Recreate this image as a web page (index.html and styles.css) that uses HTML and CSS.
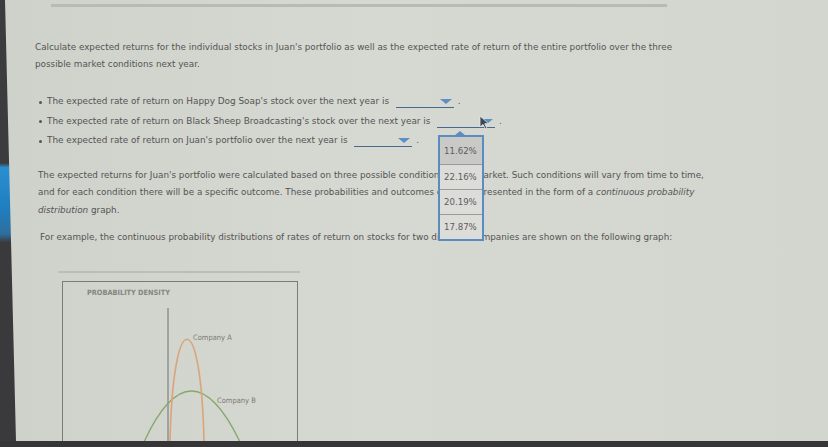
FILE: index.html
```html
<!DOCTYPE html>
<html>
<head>
<meta charset="utf-8">
<link rel="stylesheet" href="styles.css">
</head>
<body>
<div class="screen">
  <main class="page">
    <div class="top-rule"></div>
    <p class="intro">Calculate expected returns for the individual stocks in Juan's portfolio as well as the expected rate of return of the entire portfolio over the three possible market conditions next year.</p>
    <ul class="questions">
      <li>The expected rate of return on Happy Dog Soap's stock over the next year is <span class="dd"><span class="tri"></span></span> <span class="dot">.</span></li>
      <li>The expected rate of return on Black Sheep Broadcasting's stock over the next year is <span class="dd"><span class="tri"></span></span> <span class="dot">.</span></li>
      <li>The expected rate of return on Juan's portfolio over the next year is <span class="dd"><span class="tri"></span></span> <span class="dot">.</span></li>
    </ul>
    <p class="expl">The expected returns for Juan's portfolio were calculated based on three possible conditions in the market. Such conditions will vary from time to time, and for each condition there will be a specific outcome. These probabilities and outcomes can be represented in the form of a <em>continuous probability distribution</em> graph.</p>
    <p class="expl2">For example, the continuous probability distributions of rates of return on stocks for two different companies are shown on the following graph:</p>
    <section class="graph">
      <div class="graph-rule"></div>
      <div class="graph-box">
        <svg class="chart" width="235" height="160" viewBox="0 0 235 160">
          <text x="24" y="13" class="axis-label">PROBABILITY DENSITY</text>
          <line x1="105" y1="26" x2="105" y2="160" stroke="#6f706c" stroke-width="1"/>
          <path d="M81 160 Q128 58 177 160" fill="none" stroke="#86a86a" stroke-width="1.3"/>
          <path d="M107 160 C110 23 138 23 141 160" fill="none" stroke="#d9a57a" stroke-width="1.6"/>
          <text x="130" y="58" class="curve-label">Company A</text>
          <text x="154" y="121" class="curve-label">Company B</text>
        </svg>
      </div>
    </section>
  </main>
  <footer class="taskbar"></footer>
</div>
<div class="photo-edge"></div>
<div class="listbox">
  <div class="opt selected">11.62%</div>
  <div class="opt">22.16%</div>
  <div class="opt">20.19%</div>
  <div class="opt">17.87%</div>
</div>
<svg class="cursor" width="12" height="16" viewBox="0 0 12 16"><path d="M1 1 L1 12 L4 9.5 L6.5 14 L8 13.3 L5.7 8.8 L9.5 8.6 Z" fill="#3d4752" stroke="#e8e8e8" stroke-width="0.8"/></svg>
</body>
</html>
```

FILE: styles.css
```css
html, body {
  margin: 0;
  padding: 0;
}
body {
  width: 828px;
  height: 447px;
  overflow: hidden;
  background: #3a3a3c;
  font-family: "DejaVu Sans", Verdana, sans-serif;
  position: relative;
}
.screen {
  height: 447px;
  display: flex;
  flex-direction: column;
}
.page {
  flex: 1;
  overflow: hidden;
  background: linear-gradient(90deg, #cfd1cb 0%, #d6d8d2 45%, #d3d6ce 100%);
  color: #545454;
  font-size: 8.8px;
  padding-left: 35px;
}
.top-rule {
  margin: 4px 0 0 16px;
  width: 616px;
  height: 3px;
  background: #b9bab3;
}
.intro {
  margin: 32px 0 0 0;
  width: 660px;
  line-height: 17px;
}
.questions {
  margin: 19px 0 0 0;
  padding: 0 0 0 12px;
  list-style: none;
}
.questions li {
  line-height: 19.5px;
  position: relative;
  font-size: 8.9px;
}
.questions li::before {
  content: "";
  position: absolute;
  left: -8px;
  top: 8.5px;
  width: 3px;
  height: 3px;
  border-radius: 50%;
  background: #555;
}
.dd {
  display: inline-block;
  width: 58px;
  height: 10px;
  border-bottom: 1px solid #48688f;
  vertical-align: -4px;
  margin-left: 4px;
  position: relative;
}
.tri {
  position: absolute;
  right: 2px;
  top: 2px;
  width: 0;
  height: 0;
  border-left: 6px solid transparent;
  border-right: 6px solid transparent;
  border-top: 5px solid #5d8fc7;
}
.dot {
  margin-left: 1px;
}
.expl {
  margin: 16px 0 0 3px;
  width: 680px;
  line-height: 17.5px;
}
.expl2 {
  margin: 10px 0 0 5px;
  line-height: 17px;
}
.graph {
  margin: 25px 0 0 23px;
}
.graph-rule {
  width: 242px;
  height: 2px;
  background: #bdbdb3;
}
.graph-box {
  margin: 8px 0 0 4px;
  width: 234px;
  height: 160px;
  border: 1px solid #7a7b77;
  border-bottom: none;
}
.chart {
  display: block;
}
.axis-label {
  font-family: "DejaVu Sans Condensed", "DejaVu Sans", sans-serif;
  font-size: 7.3px;
  font-weight: bold;
  fill: #858680;
}
.curve-label {
  font-family: "DejaVu Sans Condensed", "DejaVu Sans", sans-serif;
  font-size: 7.5px;
  fill: #7b7c78;
}
.taskbar {
  height: 6px;
  background: #363638;
}
.photo-edge {
  position: absolute;
  left: 0;
  top: 0;
  width: 20px;
  height: 441px;
  background: linear-gradient(180deg, #3c3c3e 0%, #3c3c3e 37%, #2a8fcf 38%, #1f7fc0 47%, #2d6f9e 53%, #3a3a3c 55%, #3a3a3c 100%);
  clip-path: polygon(0 0, 5px 0, 16px 441px, 0 441px);
}
.listbox {
  position: absolute;
  left: 438px;
  top: 135px;
  width: 42px;
  border: 2px solid #5a8cc2;
  background: #dcddd8;
  font-size: 8.6px;
  color: #5c5c5c;
}
.listbox::before {
  content: "";
  position: absolute;
  left: 14px;
  top: -6px;
  border-left: 6px solid transparent;
  border-right: 6px solid transparent;
  border-bottom: 5px solid #5a8cc2;
}
.opt {
  height: 24px;
  line-height: 24px;
  padding-left: 4px;
  border-top: 1px solid #9a9b97;
}
.opt:first-child {
  border-top: none;
  height: 27px;
  line-height: 29px;
}
.opt.selected {
  background: #c9cac6;
}
.cursor {
  position: absolute;
  left: 479px;
  top: 115px;
}
```
